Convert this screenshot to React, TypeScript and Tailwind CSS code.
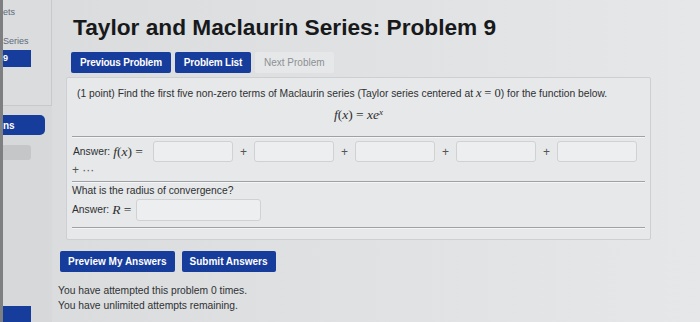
import { Fragment } from 'react';

const sans = "font-['Liberation_Sans',Arial,sans-serif]";
const serif = "font-['Liberation_Serif','Times_New_Roman',serif]";

function AnswerBox({ className = '' }: { className?: string }) {
  return <div className={`h-[21px] rounded-[3px] border border-[#cfd1d3] bg-[#eceeef] ${className}`} />;
}

function Rule() {
  return <div className="h-px bg-[#9fa2a5] shadow-[0_1px_0_#f4f5f6]" />;
}

export default function App() {
  return (
    <div className={`flex h-[322px] w-[700px] overflow-hidden bg-gradient-to-r from-[#d9dbdc] to-[#e5e7e8] text-[#2a2c2e] ${sans}`}>
      {/* sidebar */}
      <aside className="flex w-[52px] shrink-0 border-l-[3px] border-[#7d7f81] bg-[#d6d8d9]">
        <div className="flex flex-1 flex-col">
          <div className="flex h-[106px] flex-col border-r border-b border-[#c7c9ca] bg-[#dadcdd]">
            <span className="mt-[7px] text-[9px] leading-[10px] text-[#5d6a7a]">ets</span>
            <span className="mt-[19px] text-[9px] leading-[10px] text-[#5d6a7a]">Series</span>
            <div className="mt-[4px] flex h-[17px] w-[28px] items-center bg-[#163c9c] text-[9px] font-bold text-white">9</div>
          </div>
          <div className="mt-[9px] flex h-[20px] w-[42px] items-center rounded-r-[5px] bg-[#163c9c] text-[10px] font-bold text-white">ns</div>
          <div className="mt-[10px] h-[15px] w-[28px] rounded-r-[3px] bg-[#c4c6c7]" />
          <div className="mt-auto h-[16px] w-[28px] bg-[#163c9c]" />
        </div>
      </aside>

      {/* main */}
      <main className="flex flex-1 flex-col pl-[14px]">
        <h1 className="mt-[14px] pl-[7px] text-[22.7px] leading-[27px] font-bold text-[#18191b]">
          Taylor and Maclaurin Series: Problem 9
        </h1>

        <div className="mt-[11px] flex gap-[4px] pl-[5px]">
          <button className="h-[21px] rounded-[2px] bg-[#163c9c] px-[9px] text-[10px] font-bold tracking-[-0.2px] text-white">Previous Problem</button>
          <button className="h-[21px] rounded-[2px] bg-[#163c9c] px-[9px] text-[10px] font-bold tracking-[-0.2px] text-white">Problem List</button>
          <button className="h-[21px] rounded-[2px] bg-[#e6e7e8] px-[9px] text-[10px] text-[#8d9094]">Next Problem</button>
        </div>

        <section className="mt-[4px] flex w-[585px] flex-col rounded-[2px] border border-[#cdd0d2] bg-[#e6e8e9] px-[5px] pt-[8px] pb-[11px] text-[10.3px] leading-[14px] text-[#2e3032]">
          <p className="pl-[5px]">
            (1 point) Find the first five non-zero terms of Maclaurin series (Taylor series centered at{' '}
            <span className={`${serif} text-[12.5px] italic`}>x</span>{' '}
            <span className={`${serif} text-[12.5px]`}>= 0</span>) for the function below.
          </p>
          <p className={`mt-[5px] text-center leading-[18px] ${serif} text-[13.5px]`}>
            <i>f</i>(<i>x</i>) = <i>xe</i>
            <sup className="text-[9px] italic">x</sup>
          </p>
          <div className="mt-[12px]">
            <Rule />
          </div>

          <div className="mt-[4px] flex items-center pl-[1px]">
            <span>Answer:</span>
            <span className={`ml-[3px] ${serif} text-[13.5px]`}>
              <i>f</i>(<i>x</i>) =
            </span>
            {[0, 1, 2, 3, 4].map((i) => (
              <Fragment key={i}>
                {i > 0 && <span className="w-[21px] text-center text-[12px] text-[#555]">+</span>}
                <AnswerBox className={i === 0 ? 'ml-[10px] w-[80px]' : 'w-[80px]'} />
              </Fragment>
            ))}
          </div>
          <div className="mt-[1px] text-[12px] leading-[14px] text-[#555]">+ ···</div>
          <div className="mt-[4px]">
            <Rule />
          </div>

          <p className="mt-[2px]">What is the radius of convergence?</p>
          <div className="mt-[1px] flex items-center">
            <span>Answer:</span>
            <span className={`ml-[3px] ${serif} text-[13.5px]`}>
              <i>R</i> =
            </span>
            <AnswerBox className="ml-[5px] h-[22px] w-[125px]" />
          </div>
          <div className="mt-[6px]">
            <Rule />
          </div>
        </section>

        <div className="mt-[11px] flex gap-[7px]">
          <button className="ml-[-6px] h-[21px] rounded-[2px] bg-[#163c9c] px-[8px] text-[10px] font-bold text-white">Preview My Answers</button>
          <button className="h-[21px] rounded-[2px] bg-[#163c9c] px-[8px] text-[10px] font-bold text-white">Submit Answers</button>
        </div>

        <p className="mt-[11px] ml-[-8px] text-[10.3px] leading-[15px] text-[#303235]">
          You have attempted this problem 0 times.
          <br />
          You have unlimited attempts remaining.
        </p>
      </main>
    </div>
  );
}
